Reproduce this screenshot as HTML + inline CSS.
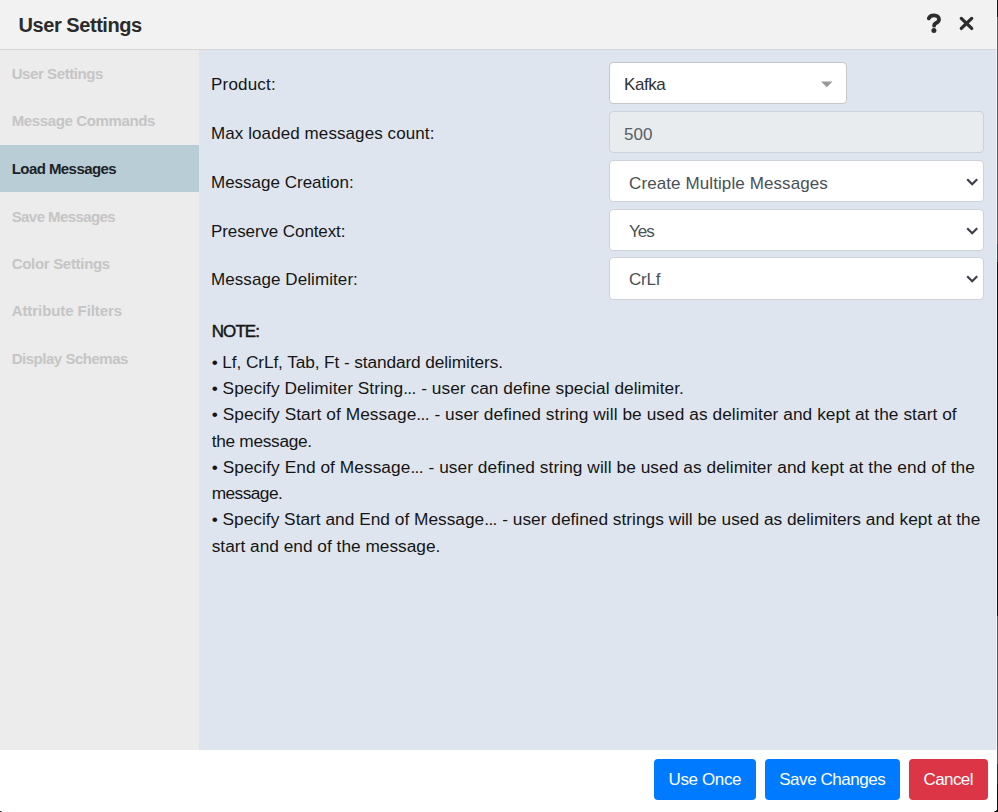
<!DOCTYPE html>
<html><head><meta charset="utf-8">
<style>
html,body{margin:0;padding:0;}
body{width:998px;height:812px;overflow:hidden;position:relative;background:linear-gradient(to bottom,#111 0,#111 17px,#5e5e5e 17px,#5e5e5e 244px,#1d4a70 244px,#1d4a70 262px,#111 262px,#111 616px,#5a5a5a 616px,#5a5a5a 764px,#1a3550 764px,#1a3550 784px,#111 784px);font-family:"Liberation Sans",sans-serif;color:#212529;}
.dlg{position:absolute;left:0;top:0;width:997px;height:812px;background:#fff;}
.hdr{position:absolute;left:0;top:0;width:997px;height:49px;background:#f2f2f2;border-bottom:1px solid #d6d6d6;}
.title{position:absolute;left:18.6px;top:1px;line-height:49px;font-size:20px;letter-spacing:-0.45px;font-weight:bold;color:#2b2b2b;white-space:nowrap;}
.side{position:absolute;left:0;top:50px;width:199px;height:700px;background:#ececec;}
.item{position:absolute;left:11.7px;line-height:20px;font-size:15px;font-weight:bold;color:#c5c5c5;white-space:nowrap;}
.item.on{color:#1d2227;}
.act{position:absolute;left:0;width:199px;height:47px;background:#b9cdd6;}
.cont{position:absolute;left:199px;top:50px;width:798px;height:700px;background:#dfe5ee;}
.lbl{position:absolute;left:12px;font-size:17px;color:#151515;white-space:nowrap;line-height:26px;}
.ctl{position:absolute;left:410px;width:373px;height:40px;border:1px solid #cdd2d9;border-radius:4px;background:#fff;box-sizing:content-box;}
.ctl span{position:absolute;left:19px;top:1.7px;line-height:40px;font-size:17px;color:#495057;white-space:nowrap;}
.ctl.sel span{left:19px;}
.note{position:absolute;left:12.7px;top:268.3px;width:780px;height:300px;color:#151515;white-space:nowrap;}
.nt{position:absolute;left:0;top:0.8px;font-size:17px;line-height:26.25px;letter-spacing:-0.9px;}
.nt b{font-weight:normal;-webkit-text-stroke:0.45px #151515;}
.nl{position:absolute;left:0;font-size:17.3px;line-height:26.25px;}
.el{letter-spacing:-0.6px;margin-right:0.6px;}
.ftr{position:absolute;left:0;top:750px;width:997px;height:62px;background:#fff;}
.btn{position:absolute;top:9px;height:41px;border-radius:4px;background:#007bff;color:#fff;font-size:17px;line-height:42px;text-align:center;white-space:nowrap;}
</style></head><body>
<div class="dlg">
  <div class="hdr">
    <div class="title">User Settings</div>
    <svg style="position:absolute;left:920px;top:8px" width="60" height="32" viewBox="920 8 60 32">
      <path d="M928.8 18.4 C929.6 16 931.6 15.3 934 15.3 C937.1 15.3 939 17.1 939 19.4 C939 21.6 937.2 22.5 935.7 23.3 C934.6 23.9 934.1 24.6 934.1 25.7" fill="none" stroke="#2d2d2d" stroke-width="3.8" stroke-linecap="round"/>
      <circle cx="933.9" cy="30.5" r="2.5" fill="#2d2d2d"/>
      <path d="M961.3 18.4 L971.7 28.4 M971.7 18.4 L961.3 28.4" stroke="#2d2d2d" stroke-width="3.3" stroke-linecap="round"/>
    </svg>
  </div>
  <div class="side">
    <div class="act" style="top:95px"></div>
    <div class="item" style="top:13.7px;letter-spacing:-0.417px">User Settings</div>
    <div class="item" style="top:61.3px;letter-spacing:-0.367px">Message Commands</div>
    <div class="item on" style="top:108.8px;letter-spacing:-0.558px">Load Messages</div>
    <div class="item" style="top:156.9px;letter-spacing:-0.583px">Save Messages</div>
    <div class="item" style="top:203.8px;letter-spacing:-0.308px">Color Settings</div>
    <div class="item" style="top:251.4px;letter-spacing:-0.075px">Attribute Filters</div>
    <div class="item" style="top:299px;letter-spacing:-0.479px">Display Schemas</div>
  </div>
  <div class="cont">
    <div class="lbl" style="top:22px;letter-spacing:0.2px">Product:</div>
    <div class="lbl" style="top:71px;letter-spacing:0.09px">Max loaded messages count:</div>
    <div class="lbl" style="top:120px">Message Creation:</div>
    <div class="lbl" style="top:169px;letter-spacing:-0.1px">Preserve Context:</div>
    <div class="lbl" style="top:217px;letter-spacing:0.08px">Message Delimiter:</div>

    <div class="ctl" style="top:12px;width:236px;border-color:#c6c6c6"><span style="left:14px;color:#2f3235;letter-spacing:-0.45px">Kafka</span>
      <svg style="position:absolute;left:211px;top:18px" width="12" height="7" viewBox="0 0 12 7"><path d="M0 0.5 L11.5 0.5 L5.75 6.2 Z" fill="#999"/></svg>
    </div>
    <div class="ctl" style="top:61px;background:#e9ecef"><span style="left:14px;color:#575e65;top:2.5px">500</span></div>
    <div class="ctl sel" style="top:110px"><span style="letter-spacing:0.1px;top:2.5px">Create Multiple Messages</span>
      <svg style="position:absolute;left:356px;top:17px" width="13" height="8" viewBox="0 0 13 8"><path d="M1.2 1.2 L6.2 6.2 L11.2 1.2" fill="none" stroke="#383e44" stroke-width="2.1"/></svg>
    </div>
    <div class="ctl sel" style="top:159px"><span style="letter-spacing:-1px">Yes</span>
      <svg style="position:absolute;left:356px;top:17px" width="13" height="8" viewBox="0 0 13 8"><path d="M1.2 1.2 L6.2 6.2 L11.2 1.2" fill="none" stroke="#383e44" stroke-width="2.1"/></svg>
    </div>
    <div class="ctl sel" style="top:207px;height:41px"><span style="letter-spacing:-0.2px;top:2.2px">CrLf</span>
      <svg style="position:absolute;left:356px;top:17px" width="13" height="8" viewBox="0 0 13 8"><path d="M1.2 1.2 L6.2 6.2 L11.2 1.2" fill="none" stroke="#383e44" stroke-width="2.1"/></svg>
    </div>

    <div class="note">
      <div class="nt"><b>NOTE:</b></div>
      <div class="nl" style="top:30.6px"><div style="letter-spacing:-0.11px">• Lf, CrLf, Tab, Ft - standard delimiters.</div><div style="letter-spacing:0.04px">• Specify Delimiter String<span class="el">...</span> - user can define special delimiter.</div><div style="letter-spacing:0.064px">• Specify Start of Message<span class="el">...</span> - user defined string will be used as delimiter and kept at the start of</div><div style="letter-spacing:-0.3px">the message.</div><div style="letter-spacing:0.062px">• Specify End of Message<span class="el">...</span> - user defined string will be used as delimiter and kept at the end of the</div><div style="letter-spacing:-0.55px">message.</div><div style="letter-spacing:0.011px">• Specify Start and End of Message<span class="el">...</span> - user defined strings will be used as delimiters and kept at the</div><div style="letter-spacing:0px">start and end of the message.</div></div>
    </div>
  </div>
  <div class="ftr">
    <div class="btn" style="left:654px;width:102px;letter-spacing:-0.37px;text-indent:-0.37px">Use Once</div>
    <div class="btn" style="left:765px;width:135px;letter-spacing:-0.45px;text-indent:-0.45px">Save Changes</div>
    <div class="btn" style="left:909px;width:79px;background:#dc3545;letter-spacing:-0.58px;text-indent:-0.58px">Cancel</div>
  </div>
  <div style="position:absolute;left:996px;top:0;width:1px;height:812px;background:rgba(255,255,255,0.6)"></div>
  <div style="position:absolute;left:0;top:811px;width:1px;height:1px;background:#1a2a1a"></div>
  <div style="position:absolute;left:1px;top:811px;width:1px;height:1px;background:#8a948a"></div>
  <div style="position:absolute;left:995px;top:811px;width:2px;height:1px;background:#111"></div>
  <div style="position:absolute;left:994px;top:811px;width:1px;height:1px;background:#777"></div>
  <div style="position:absolute;left:996px;top:810px;width:1px;height:1px;background:#555"></div>
</div>
</body></html>
